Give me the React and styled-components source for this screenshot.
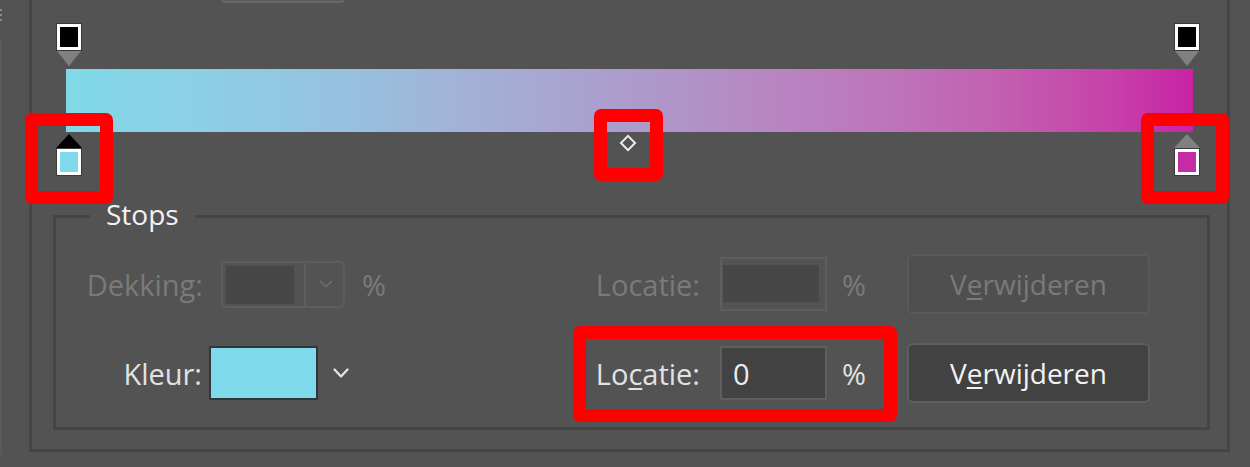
import React from "react";
import styled, { createGlobalStyle } from "styled-components";

const Global = createGlobalStyle`
  html, body { margin: 0; padding: 0; background: #535353; }
  body { font-family: "Open Sans", "Noto Sans", sans-serif; }
  #root { width: 1250px; height: 467px; overflow: hidden; }
`;

const Page = styled.div`
  position: relative;
  width: 1250px;
  height: 467px;
  overflow: hidden;
  display: flex;
  align-items: flex-start;
  background: #535353;
`;

const LeftEdge = styled.div`
  flex: none;
  width: 29px;
  height: 455px;
  display: flex;
  flex-direction: column;
  align-items: flex-start;
`;

const Gripper = styled.div`
  margin-top: 9px;
  display: flex;
  flex-direction: column;
  gap: 3px;
  & > i {
    display: block;
    width: 2px;
    height: 2px;
    background: #8c8c8c;
  }
`;

const EdgeStrip = styled.div`
  margin-top: 18px;
  width: 2px;
  flex: 1;
  background: #5b5b5b;
`;

const Panel = styled.div`
  flex: none;
  width: 1195px;
  border: 3px solid #454545;
  border-top: none;
  padding-bottom: 19px;
  display: flex;
  flex-direction: column;
  align-items: flex-start;
`;

const TopStub = styled.div`
  margin-left: 190px;
  width: 122px;
  height: 3px;
  box-sizing: border-box;
  border: 2px solid #676767;
  border-top: none;
  border-radius: 0 0 5px 5px;
  background: #5a5a5a;
`;

const GradientEditor = styled.div`
  margin-top: 21px;
  margin-left: 34px;
  width: 1127px;
  display: flex;
  flex-direction: column;
`;

const Track = styled.div`
  position: relative;
  height: ${(p) => p.$h}px;
`;

const Bar = styled.div`
  height: 63px;
  background: linear-gradient(
    to right,
    #80d9e8 0%,
    #8bd1e5 10%,
    #97c1de 25%,
    #a2b2d7 35%,
    #a9a3d0 45%,
    #ae98ca 52%,
    #b787c2 62%,
    #bd76ba 72%,
    #c262b1 82%,
    #c644aa 92%,
    #c923a5 100%
  );
`;

const Marker = styled.div`
  position: absolute;
  top: ${(p) => p.$top}px;
  width: 24px;
  transform: translateX(-50%);
  display: flex;
  flex-direction: column;
  align-items: center;
`;

const Swatchlet = styled.div`
  width: 24px;
  height: 26px;
  box-sizing: border-box;
  border: 3px solid #ffffff;
  box-shadow: 0 0 0 1px #3a3a3a;
  background: ${(p) => p.$color};
`;

const TriDown = styled.div`
  margin-top: 1px;
  width: 0;
  height: 0;
  border-left: 12px solid transparent;
  border-right: 12px solid transparent;
  border-top: 15px solid ${(p) => p.$color};
`;

const TriUp = styled.div`
  margin-bottom: 1px;
  width: 0;
  height: 0;
  border-left: 13px solid transparent;
  border-right: 13px solid transparent;
  border-bottom: 14px solid ${(p) => p.$color};
`;

const Diamond = styled.div`
  position: absolute;
  top: 5px;
  width: 12px;
  height: 12px;
  box-sizing: border-box;
  border: 2px solid #ececec;
  transform: translateX(-50%) rotate(45deg);
`;

const GroupBox = styled.div`
  position: relative;
  margin-top: 39px;
  margin-left: 21px;
  width: 1157px;
  box-sizing: border-box;
  border: 3px solid #454545;
  padding: 36px 0 24px 0;
  display: flex;
  flex-direction: column;
  gap: 29px;
`;

const Legend = styled.div`
  position: absolute;
  top: -19px;
  left: 34px;
  padding: 0 16px;
  background: #535353;
  color: #f2f2f2;
  font-size: 28px;
  line-height: 30px;
`;

const Row = styled.div`
  height: 60px;
  display: flex;
  align-items: center;
`;

const LeftGroup = styled.div`
  flex: none;
  width: 504px;
  display: flex;
  align-items: center;
`;

const RightGroup = styled.div`
  flex: none;
  display: flex;
  align-items: center;
`;

const Label = styled.div`
  flex: none;
  width: ${(p) => p.$w}px;
  text-align: right;
  font-size: 29px;
  color: ${(p) => (p.$disabled ? "#7a7a7a" : "#e2e2e2")};
  white-space: nowrap;
`;

const Mnemonic = styled.span`
  text-decoration: underline;
  text-decoration-thickness: 1.5px;
  text-underline-offset: 3px;
`;

const Dropdown = styled.div`
  flex: none;
  margin-left: 18px;
  width: 124px;
  height: 47px;
  box-sizing: border-box;
  border: 2px solid #5d5d5d;
  border-radius: 5px;
  display: flex;
`;

const DropdownValue = styled.div`
  flex: 1;
  padding: 3px 10px 2px 3px;
  display: flex;
  & > div {
    flex: 1;
    background: #474747;
  }
`;

const DropdownToggle = styled.div`
  flex: none;
  width: 35px;
  border-left: 2px solid #5d5d5d;
  display: flex;
  align-items: center;
  justify-content: center;
  padding-left: 2px;
`;

const Percent = styled.div`
  flex: none;
  margin-left: ${(p) => p.$ml || 0}px;
  width: ${(p) => p.$w || 30}px;
  box-sizing: border-box;
  padding-left: ${(p) => p.$pl || 0}px;
  font-size: 29px;
  color: ${(p) => (p.$disabled ? "#7a7a7a" : "#e2e2e2")};
`;

const ColorWell = styled.div`
  flex: none;
  margin-left: 7px;
  width: 109px;
  height: 54px;
  box-sizing: border-box;
  border: 2px solid #2d3839;
  background: #7fdbeb;
`;

const Chevron = styled.div`
  flex: none;
  margin-left: ${(p) => p.$ml}px;
  display: flex;
  align-items: center;
`;

const Field = styled.div`
  flex: none;
  margin-left: 20px;
  width: 107px;
  height: 54px;
  box-sizing: border-box;
  border: 2px solid #5e5e5e;
  display: flex;
  align-items: center;
  ${(p) =>
    p.$disabled
      ? `
    padding: 6px 6px 7px 1px;
    background: #535353;
    & > div { width: 100%; height: 100%; background: #474747; }
  `
      : `
    padding-left: 11px;
    background: #424242;
    color: #ececec;
    font-size: 29px;
  `}
`;

const Button = styled.div`
  flex: none;
  width: 243px;
  height: 60px;
  box-sizing: border-box;
  border: 2px solid ${(p) => (p.$disabled ? "#5a5a5a" : "#5e5e5e")};
  border-radius: 6px;
  background: ${(p) => (p.$disabled ? "#4f4f4f" : "#424242")};
  color: ${(p) => (p.$disabled ? "#7a7a7a" : "#f2f2f2")};
  font-size: 28px;
  display: flex;
  align-items: center;
  justify-content: center;
`;

const Callout = styled.div`
  position: absolute;
  left: ${(p) => p.$x}px;
  top: ${(p) => p.$y}px;
  width: ${(p) => p.$w}px;
  height: ${(p) => p.$h}px;
  box-sizing: border-box;
  border: 13px solid #ff0000;
  border-radius: 7px;
  pointer-events: none;
`;

const ChevronIcon = ({ color, w = 14, h = 9, sw = 2 }) => (
  <svg width={w} height={h} viewBox={`0 0 ${w} ${h}`}>
    <polyline
      points={`1.5,1.5 ${w / 2},${h - 1.5} ${w - 1.5},1.5`}
      fill="none"
      stroke={color}
      strokeWidth={sw}
      strokeLinecap="round"
      strokeLinejoin="round"
    />
  </svg>
);

const stopPos = (pct) => ({ left: `${3 + pct * 1117.5}px` });

const opacityStops = [{ pct: 0 }, { pct: 1 }];
const colorStops = [
  { pct: 0, color: "#7fd9ea", selected: true },
  { pct: 1, color: "#c62ba6", selected: false },
];

export default function App() {
  return (
    <Page>
      <Global />
      <LeftEdge>
        <Gripper>
          <i />
          <i />
          <i />
        </Gripper>
        <EdgeStrip />
      </LeftEdge>
      <Panel>
        <TopStub />
        <GradientEditor>
          <Track $h={45}>
            {opacityStops.map((s) => (
              <Marker key={s.pct} $top={0} style={stopPos(s.pct)}>
                <Swatchlet $color="#000000" />
                <TriDown $color="#808080" />
              </Marker>
            ))}
          </Track>
          <Bar />
          <Track $h={44}>
            {colorStops.map((s) => (
              <Marker key={s.pct} $top={2} style={stopPos(s.pct)}>
                <TriUp $color={s.selected ? "#000000" : "#808080"} />
                <Swatchlet $color={s.color} />
              </Marker>
            ))}
            <Diamond style={stopPos(0.5)} />
          </Track>
        </GradientEditor>
        <GroupBox>
          <Legend>Stops</Legend>
          <Row>
            <LeftGroup>
              <Label $w={147} $disabled>
                Dekking:
              </Label>
              <Dropdown>
                <DropdownValue>
                  <div />
                </DropdownValue>
                <DropdownToggle>
                  <ChevronIcon color="#6e6e6e" w={14} h={8} sw={1.6} />
                </DropdownToggle>
              </Dropdown>
              <Percent $ml={17} $disabled>
                %
              </Percent>
            </LeftGroup>
            <RightGroup>
              <Label $w={140} $disabled>
                Locatie:
              </Label>
              <Field $disabled>
                <div />
              </Field>
              <Percent $w={80} $pl={15} $disabled>
                %
              </Percent>
              <Button $disabled>
                <span>
                  V<Mnemonic>e</Mnemonic>rwijderen
                </span>
              </Button>
            </RightGroup>
          </Row>
          <Row>
            <LeftGroup>
              <Label $w={146}>Kleur:</Label>
              <ColorWell />
              <Chevron $ml={15}>
                <ChevronIcon color="#e6e6e6" w={16} h={10} sw={2.2} />
              </Chevron>
            </LeftGroup>
            <RightGroup>
              <Label $w={140}>
                Lo<Mnemonic>c</Mnemonic>atie:
              </Label>
              <Field>0</Field>
              <Percent $w={80} $pl={15}>
                %
              </Percent>
              <Button>
                <span>
                  V<Mnemonic>e</Mnemonic>rwijderen
                </span>
              </Button>
            </RightGroup>
          </Row>
        </GroupBox>
      </Panel>
      <Callout $x={25} $y={113} $w={88} $h={91} />
      <Callout $x={594} $y={109} $w={69} $h={72} />
      <Callout $x={1141} $y={113} $w={88} $h={91} />
      <Callout $x={573} $y={326} $w={324} $h={96} />
    </Page>
  );
}
